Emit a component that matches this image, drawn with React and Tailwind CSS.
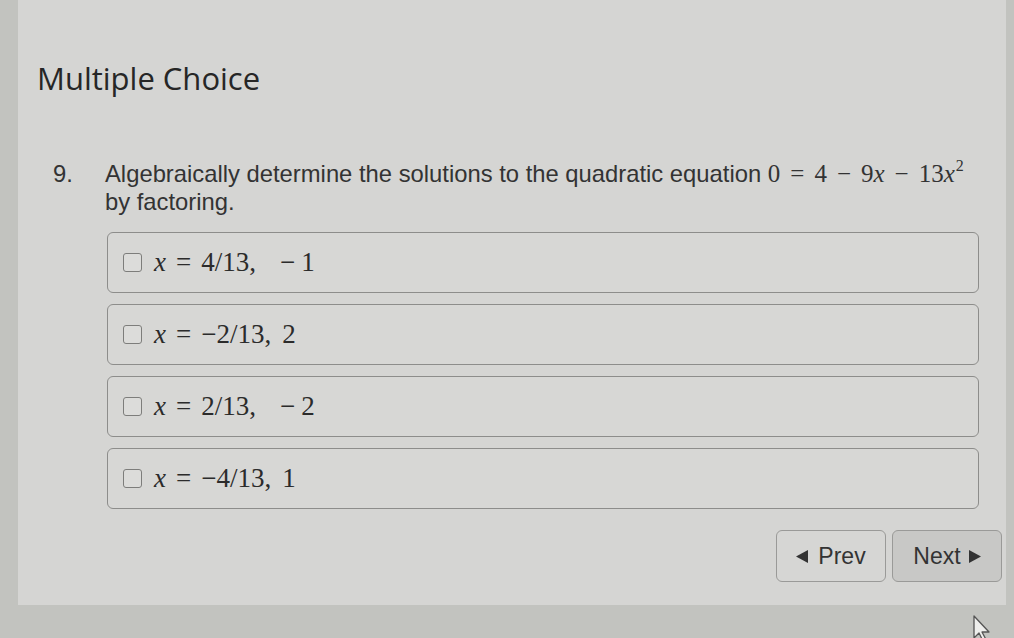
const serif = { fontFamily: '"Liberation Serif", "DejaVu Serif", serif' };

function Box() {
  return (
    <span className="inline-block w-[19px] h-[19px] rounded-[3px] border-[1.5px] border-[#7d7d7b] bg-[#dcdcda] shrink-0" />
  );
}

function Eq() {
  return <span className="mx-[10px]">=</span>;
}

const options = [
  <>
    <i>x</i>
    <Eq />
    4/13,<span className="ml-[24px]">−</span>
    <span className="ml-[6px]">1</span>
  </>,
  <>
    <i>x</i>
    <Eq />
    −2/13,<span className="ml-[11px]">2</span>
  </>,
  <>
    <i>x</i>
    <Eq />
    2/13,<span className="ml-[24px]">−</span>
    <span className="ml-[6px]">2</span>
  </>,
  <>
    <i>x</i>
    <Eq />
    −4/13,<span className="ml-[11px]">1</span>
  </>,
];

function Option({ children }) {
  return (
    <div className="h-[61px] rounded-[6px] border border-[#8d8d8b] bg-[#d7d7d5] flex items-center pl-[15px] gap-[12px]">
      <Box />
      <span className="text-[27px] leading-none text-[#2b2b2b]" style={serif}>
        {children}
      </span>
    </div>
  );
}

export default function App() {
  return (
    <div
      className="relative w-[1014px] h-[638px] bg-[#c2c3bf] overflow-hidden"
      style={{ fontFamily: '"Liberation Sans", Arial, sans-serif' }}
    >
      <div className="ml-[18px] w-[988px] h-[605px] bg-[#d5d5d3] flex flex-col">
        <h1
          className="pt-[58px] pl-[19px] text-[31px] leading-[40px] text-[#262626]"
          style={{ fontFamily: '"Open Sans", sans-serif' }}
        >
          Multiple Choice
        </h1>

        <div className="mt-[62px] flex text-[23.8px] leading-[28px] text-[#333]">
          <span className="w-[87px] pl-[35px]">9.</span>
          <div>
            <div className="h-[28px]">
              Algebraically determine the solutions to the quadratic equation{' '}
              <span className="text-[25px] leading-none" style={serif}>
                0<span className="mx-[10px]">=</span>4<span className="mx-[10px]">−</span>9<i>x</i>
                <span className="mx-[10px]">−</span>13<i>x</i>
                <span className="text-[16px] relative -top-[11px] ml-[1px]">2</span>
              </span>
            </div>
            <div>by factoring.</div>
          </div>
        </div>

        <div className="mt-[16px] ml-[89px] w-[872px] flex flex-col gap-[11px]">
          {options.map((o, i) => (
            <Option key={i}>{o}</Option>
          ))}
        </div>

        <div className="mt-[21px] flex justify-end gap-[6px] pr-[4px] text-[23px] text-[#333]">
          <button className="w-[110px] h-[52px] rounded-[6px] border border-[#9a9a98] bg-[#d6d6d4] flex items-center justify-center gap-[10px]">
            <svg width="12" height="13" viewBox="0 0 12 13">
              <polygon points="12,0 12,13 0,6.5" fill="#333" />
            </svg>
            Prev
          </button>
          <button className="w-[110px] h-[52px] rounded-[6px] border border-[#9a9a98] bg-[#c8c8c6] flex items-center justify-center gap-[8px]">
            Next
            <svg width="12" height="13" viewBox="0 0 12 13">
              <polygon points="0,0 12,6.5 0,13" fill="#333" />
            </svg>
          </button>
        </div>
      </div>

      <svg className="absolute left-[972px] top-[614px]" width="22" height="28" viewBox="0 0 22 28">
        <path d="M2 2 L2 24 L7 19 L11 27 L14 25.5 L10 18 L17 18 Z" fill="#eeeeec" stroke="#555" strokeWidth="1.3" strokeLinejoin="round" />
      </svg>
    </div>
  );
}
